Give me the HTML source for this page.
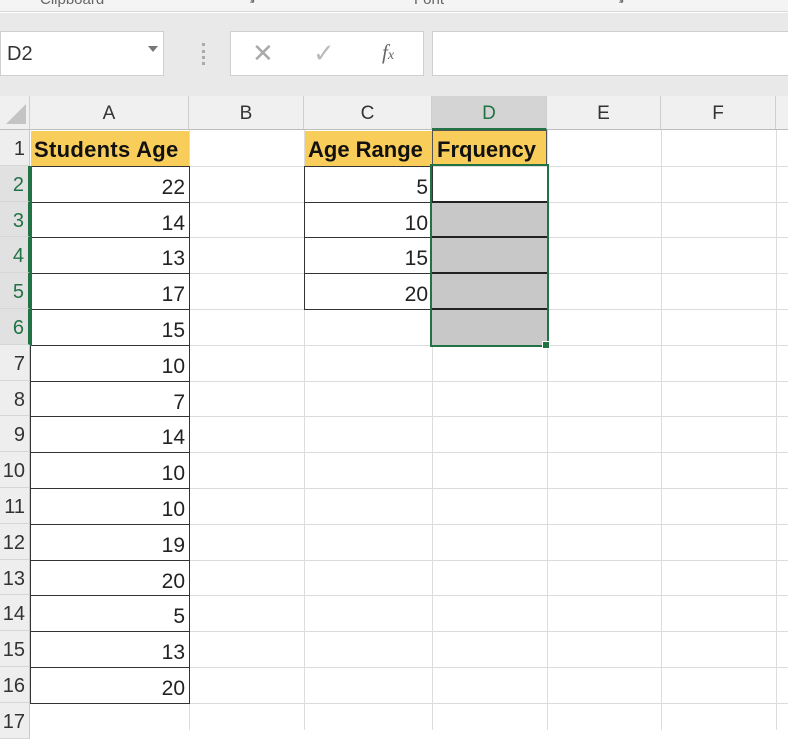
<!DOCTYPE html>
<html><head><style>
body{margin:0;width:788px;height:721px;overflow:hidden;background:#fff;font-family:"Liberation Sans",sans-serif;position:relative}
div{position:absolute;box-sizing:border-box}
.n{text-align:right;padding-right:4px;padding-top:3px;font-size:21px;color:#222;line-height:35px}
.h{font-weight:bold;font-size:22px;color:#111;line-height:38px;background:#f8cd5a;white-space:nowrap;overflow:hidden}
.rh{left:0;width:30px;font-size:20px;color:#333;background:#eeeeee;line-height:38px;text-align:right;padding-right:4px;border-bottom:1px solid #d6d6d6;border-right:1px solid #c8c8c8;overflow:hidden;white-space:nowrap}
.ch{top:96px;height:34px;background:#f0f0f0;border-right:1px solid #cfcfcf;border-bottom:1px solid #bdbdbd;text-align:center;line-height:36px;font-size:19px;color:#333}
.vl{top:130px;width:1px;height:600px;background:#dcdcdc}
.hl{left:30px;width:760px;height:1px;background:#dcdcdc}
</style></head><body>
<div style="left:0;top:0;width:788px;height:12px;background:#f4f4f4;border-bottom:1px solid #d8d8d8"></div>
<div style="left:40px;top:-9px;font-size:15px;color:#666">Clipboard</div>
<div style="left:245px;top:-9px;font-size:13px;color:#666">↘</div>
<div style="left:414px;top:-9px;font-size:15px;color:#666">Font</div>
<div style="left:614px;top:-9px;font-size:13px;color:#666">↘</div>
<div style="left:0;top:13px;width:788px;height:83px;background:#e9e9e9"></div>
<div style="left:0;top:31px;width:164px;height:45px;background:#fff;border:1px solid #cfcfcf;font-size:20px;color:#333;line-height:45px;padding-left:6px">D2</div>
<div style="left:148px;top:46px;width:0;height:0;border-left:5px solid transparent;border-right:5px solid transparent;border-top:6px solid #777"></div>
<div style="left:202px;top:43px;width:3px;height:22px;border-left:3px dotted #aaa"></div>
<div style="left:230px;top:31px;width:194px;height:45px;background:#fff;border:1px solid #cfcfcf"></div>
<div style="left:252px;top:38px;font-size:26px;color:#aaa">✕</div>
<div style="left:313px;top:38px;font-size:26px;color:#bbb">✓</div>
<div style="left:382px;top:40px;font-size:21px;color:#666;font-family:'Liberation Serif',serif;font-style:italic">f<span style="font-size:14px">x</span></div>
<div style="left:432px;top:31px;width:360px;height:45px;background:#fff;border:1px solid #cfcfcf"></div>

<div style="left:0;top:96px;width:30px;height:34px;background:#f0f0f0;border-right:1px solid #cfcfcf;border-bottom:1px solid #bdbdbd"></div>
<div style="left:6px;top:104px;width:0;height:0;border-left:20px solid transparent;border-bottom:20px solid #c4c4c4"></div>
<div class="ch" style="left:30px;width:159px">A</div>
<div class="ch" style="left:189px;width:115px">B</div>
<div class="ch" style="left:304px;width:128px">C</div>
<div class="ch" style="left:432px;width:115px;background:#d4d4d4;color:#217346;border-bottom:2px solid #217346">D</div>
<div class="ch" style="left:547px;width:114px">E</div>
<div class="ch" style="left:661px;width:115px">F</div>
<div class="ch" style="left:776px;width:20px"></div>

<div class="vl" style="left:189px"></div><div class="vl" style="left:304px"></div><div class="vl" style="left:432px"></div><div class="vl" style="left:547px"></div><div class="vl" style="left:661px"></div><div class="vl" style="left:776px"></div>
<div class="hl" style="top:166px"></div><div class="hl" style="top:202px"></div><div class="hl" style="top:237px"></div><div class="hl" style="top:273px"></div><div class="hl" style="top:309px"></div><div class="hl" style="top:345px"></div><div class="hl" style="top:381px"></div><div class="hl" style="top:416px"></div><div class="hl" style="top:452px"></div><div class="hl" style="top:488px"></div><div class="hl" style="top:524px"></div><div class="hl" style="top:560px"></div><div class="hl" style="top:595px"></div><div class="hl" style="top:631px"></div><div class="hl" style="top:667px"></div><div class="hl" style="top:703px"></div>

<div class="rh" style="top:130px;height:36px">1</div>
<div class="rh" style="top:166px;height:36px;background:#e1e1e1;color:#217346;border-right:2px solid #217346">2</div>
<div class="rh" style="top:202px;height:35px;background:#e1e1e1;color:#217346;border-right:2px solid #217346">3</div>
<div class="rh" style="top:237px;height:36px;background:#e1e1e1;color:#217346;border-right:2px solid #217346">4</div>
<div class="rh" style="top:273px;height:36px;background:#e1e1e1;color:#217346;border-right:2px solid #217346">5</div>
<div class="rh" style="top:309px;height:36px;background:#e1e1e1;color:#217346;border-right:2px solid #217346">6</div>
<div class="rh" style="top:345px;height:36px">7</div>
<div class="rh" style="top:381px;height:35px">8</div>
<div class="rh" style="top:416px;height:36px">9</div>
<div class="rh" style="top:452px;height:36px">10</div>
<div class="rh" style="top:488px;height:36px">11</div>
<div class="rh" style="top:524px;height:36px">12</div>
<div class="rh" style="top:560px;height:35px">13</div>
<div class="rh" style="top:595px;height:36px">14</div>
<div class="rh" style="top:631px;height:36px">15</div>
<div class="rh" style="top:667px;height:36px">16</div>
<div class="rh" style="top:703px;height:36px">17</div>

<div class="h" style="left:31px;top:131px;width:158px;height:35px;padding-left:3px;letter-spacing:0.3px">Students Age</div>
<div class="h" style="left:305px;top:131px;width:127px;height:35px;padding-left:3px">Age Range</div>
<div class="h" style="left:432px;top:130px;width:115px;height:36px;padding-left:4px;border:1px solid #555">Frquency</div>

<div class="n" style="left:30px;top:166px;width:160px;height:37px;border:1px solid #333">22</div>
<div class="n" style="left:30px;top:202px;width:160px;height:36px;border:1px solid #333">14</div>
<div class="n" style="left:30px;top:237px;width:160px;height:37px;border:1px solid #333">13</div>
<div class="n" style="left:30px;top:273px;width:160px;height:37px;border:1px solid #333">17</div>
<div class="n" style="left:30px;top:309px;width:160px;height:37px;border:1px solid #333">15</div>
<div class="n" style="left:30px;top:345px;width:160px;height:37px;border:1px solid #333">10</div>
<div class="n" style="left:30px;top:381px;width:160px;height:36px;border:1px solid #333">7</div>
<div class="n" style="left:30px;top:416px;width:160px;height:37px;border:1px solid #333">14</div>
<div class="n" style="left:30px;top:452px;width:160px;height:37px;border:1px solid #333">10</div>
<div class="n" style="left:30px;top:488px;width:160px;height:37px;border:1px solid #333">10</div>
<div class="n" style="left:30px;top:524px;width:160px;height:37px;border:1px solid #333">19</div>
<div class="n" style="left:30px;top:560px;width:160px;height:36px;border:1px solid #333">20</div>
<div class="n" style="left:30px;top:595px;width:160px;height:37px;border:1px solid #333">5</div>
<div class="n" style="left:30px;top:631px;width:160px;height:37px;border:1px solid #333">13</div>
<div class="n" style="left:30px;top:667px;width:160px;height:37px;border:1px solid #333">20</div>
<div style="left:30px;top:166px;width:2px;height:180px;background:#217346"></div>

<div class="n" style="left:304px;top:166px;width:129px;height:37px;border:1px solid #333">5</div>
<div class="n" style="left:304px;top:202px;width:129px;height:36px;border:1px solid #333">10</div>
<div class="n" style="left:304px;top:237px;width:129px;height:37px;border:1px solid #333">15</div>
<div class="n" style="left:304px;top:273px;width:129px;height:37px;border:1px solid #333">20</div>

<div style="left:432px;top:202px;width:115px;height:143px;background:#c8c8c8"></div>
<div style="left:432px;top:201px;width:115px;height:2px;background:#222"></div>
<div style="left:432px;top:236px;width:115px;height:2px;background:#222"></div>
<div style="left:432px;top:272px;width:115px;height:2px;background:#222"></div>
<div style="left:432px;top:308px;width:115px;height:2px;background:#222"></div>
<div style="left:430px;top:164px;width:119px;height:183px;border:2px solid #217346"></div>
<div style="left:542px;top:341px;width:8px;height:8px;background:#217346;border:1px solid #fff"></div>
</body></html>
